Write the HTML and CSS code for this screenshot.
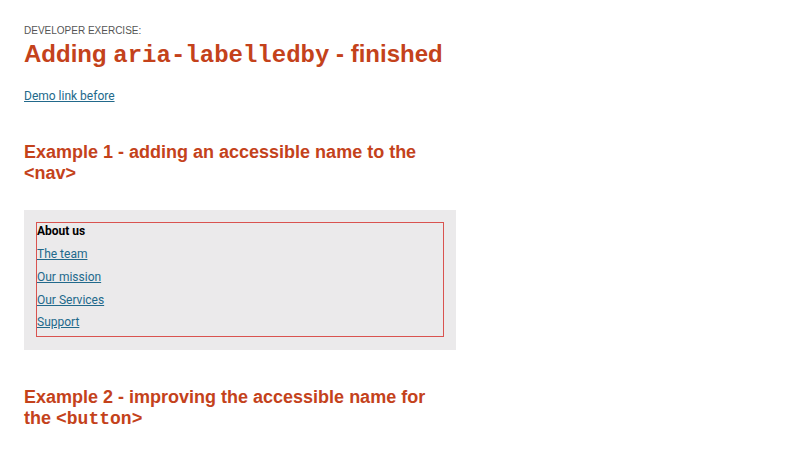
FILE: index.html
```html
<!DOCTYPE html>
<html lang="en">
<head>
<meta charset="utf-8">
<title>Adding aria-labelledby - finished</title>
<link rel="stylesheet" href="styles.css">
</head>
<body>
<main class="page">
  <p class="eyebrow">DEVELOPER EXERCISE:</p>
  <h1 class="title">Adding <code>aria-labelledby</code> - finished</h1>
  <p class="intro"><a href="#">Demo link before</a></p>

  <h2 class="example-title">Example 1 - adding an accessible name to the &lt;nav&gt;</h2>
  <div class="demo">
    <nav class="site-nav" aria-labelledby="about-heading">
      <h3 id="about-heading" class="nav-heading">About us</h3>
      <ul class="nav-list">
        <li><a href="#">The team</a></li>
        <li><a href="#">Our mission</a></li>
        <li><a href="#">Our Services</a></li>
        <li><a href="#">Support</a></li>
      </ul>
    </nav>
  </div>

  <h2 class="example-title example-two">Example 2 - improving the accessible name for the <code>&lt;button&gt;</code></h2>
</main>
</body>
</html>
```
FILE: styles.css
```css
html, body {
  margin: 0;
  padding: 0;
  background: #ffffff;
}

.page {
  width: 432px;
  padding: 23px 24px 0;
  font-family: "Liberation Sans", Arial, sans-serif;
}

.eyebrow {
  margin: 0;
  font-size: 10px;
  line-height: 16px;
  color: #555555;
}

.title {
  margin: 1px 0 0;
  font-size: 24px;
  line-height: 28px;
  font-weight: bold;
  color: #c4421b;
  white-space: nowrap;
}

.title code,
.example-title code {
  font-family: "Liberation Mono", "Courier New", monospace;
  font-weight: bold;
}

.intro {
  margin: 18px 0 0;
  font-family: Roboto, sans-serif;
  font-size: 12px;
  line-height: 16px;
}

a {
  color: #22698b;
  text-decoration: underline;
}

.example-title {
  margin: 38px 0 0;
  font-size: 18px;
  line-height: 21px;
  font-weight: bold;
  color: #c4421b;
}

.example-two {
  margin-top: 37px;
}

.demo {
  margin-top: 26px;
  background: #ebeaeb;
  padding: 12px 12px 13px;
}

.site-nav {
  border: 1px solid #d9534f;
  padding: 0 0 6px;
}

.nav-heading {
  margin: 0;
  font-family: Roboto, sans-serif;
  font-size: 12px;
  line-height: 16px;
  font-weight: bold;
  color: #000000;
}

.nav-list {
  list-style: none;
  margin: 7px 0 0;
  padding: 0;
  display: flex;
  flex-direction: column;
  gap: 6.8px;
  font-family: Roboto, sans-serif;
  font-size: 12px;
  line-height: 16px;
}
```
